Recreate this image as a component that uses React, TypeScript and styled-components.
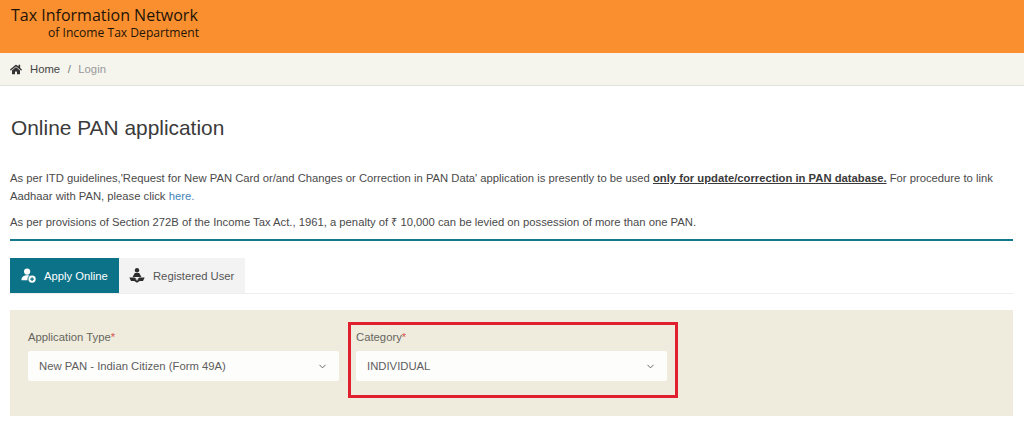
import React from "react";
import styled, { createGlobalStyle } from "styled-components";
import { FaHome } from "react-icons/fa";
import { LuChevronDown } from "react-icons/lu";

const Global = createGlobalStyle`
  html, body { margin: 0; padding: 0; background: #fff; height: 425px; overflow: hidden; }
  body { font-family: "Liberation Sans", Arial, sans-serif; color: #4a4a4a; }
`;

const Header = styled.header`
  height: 53px;
  background: #f98f2e;
  padding: 6px 0 0 11px;
  box-sizing: border-box;
`;
const Logo = styled.div`
  width: 188px;
  font-family: "Open Sans", sans-serif;
  color: #1f1408;
  text-align: right;
`;
const LogoMain = styled.div`
  font-size: 16px;
  line-height: 18px;
  white-space: nowrap;
  text-align: left;
`;
const LogoSub = styled.div`
  font-size: 12.1px;
  line-height: 17px;
  white-space: nowrap;
`;
const Crumbs = styled.nav`
  height: 33px;
  box-sizing: border-box;
  background: #f5f5ee;
  border-bottom: 1px solid #e2e2dc;
  display: flex;
  align-items: center;
  padding: 0 0 0 10px;
  font-size: 11.3px;
  color: #444;
`;
const HomeIcon = styled(FaHome)`
  width: 12px;
  height: 11px;
  color: #333;
  margin-right: 8px;
`;
const CrumbSep = styled.span`
  margin: 0 7.5px;
  color: #777;
`;
const CrumbCurrent = styled.span`
  color: #999;
`;
const Main = styled.main`
  padding: 0 11px 0 10px;
`;
const Title = styled.h1`
  margin: 0;
  padding: 29px 0 0 1px;
  font-size: 20.9px;
  line-height: 26px;
  font-weight: 400;
  color: #3b3b3b;
`;
const Para = styled.p`
  margin: 0;
  font-size: 11.26px;
  line-height: 18px;
  color: #4a4a4a;
`;
const Intro = styled(Para)`
  margin-top: 28px;
`;
const Second = styled(Para)`
  margin-top: 8px;
`;
const Here = styled.a`
  color: #3f7fb8;
`;
const Strong = styled.strong`
  text-decoration: underline;
  color: #3a3a3a;
`;
const Rule = styled.hr`
  border: 0;
  height: 2px;
  background: #12798c;
  margin: 8px 0 0;
`;
const Tabs = styled.div`
  margin-top: 17px;
  display: flex;
  height: 35px;
  border-bottom: 1px solid #eeeeee;
`;
const Tab = styled.div<{ $active?: boolean }>`
  display: flex;
  align-items: center;
  gap: 8px;
  box-sizing: border-box;
  height: 35px;
  width: ${(p) => (p.$active ? "109px" : "126px")};
  padding-left: ${(p) => (p.$active ? "11px" : "10px")};
  font-size: 11.25px;
  background: ${(p) => (p.$active ? "#0c7288" : "#f3f3f3")};
  color: ${(p) => (p.$active ? "#fff" : "#555")};
`;
const TabIcon = styled.svg`
  width: 15px;
  height: 15px;
  flex: none;
`;
const ReaderIcon = styled.svg`
  width: 16px;
  height: 15px;
  flex: none;
`;
const Panel = styled.section`
  margin-top: 16px;
  height: 106px;
  box-sizing: border-box;
  background: #efecdd;
  padding: 20px 18px 0;
  display: flex;
  gap: 17px;
`;
const Field = styled.div`
  position: relative;
  width: 311px;
`;
const Label = styled.label`
  display: block;
  font-size: 11.3px;
  line-height: 15px;
  color: #66655f;
  margin-bottom: 6px;
`;
const Req = styled.span`
  color: #d9534f;
`;
const Select = styled.div`
  height: 30px;
  box-sizing: border-box;
  background: #fdfdfb;
  border-radius: 2px;
  display: flex;
  align-items: center;
  justify-content: space-between;
  padding: 0 11px;
  font-size: 11.3px;
  color: #5e5e5e;
`;
const Chevron = styled(LuChevronDown)`
  width: 11px;
  height: 11px;
  color: #555;
`;
const Highlight = styled.div`
  position: absolute;
  left: -8px;
  top: -8px;
  width: 330px;
  height: 76px;
  box-sizing: border-box;
  border: 3px solid #e0202f;
  pointer-events: none;
`;

export default function App() {
  return (
    <>
      <Global />
      <Header>
        <Logo>
          <LogoMain>Tax Information Network</LogoMain>
          <LogoSub>of Income Tax Department</LogoSub>
        </Logo>
      </Header>
      <Crumbs>
        <HomeIcon />
        <span>Home</span>
        <CrumbSep>/</CrumbSep>
        <CrumbCurrent>Login</CrumbCurrent>
      </Crumbs>
      <Main>
        <Title>Online PAN application</Title>
        <Intro>
          As per ITD guidelines,'Request for New PAN Card or/and Changes or Correction in PAN Data' application is presently to be used{" "}
          <Strong>only for update/correction in PAN database.</Strong> For procedure to link Aadhaar with PAN, please click <Here>here.</Here>
        </Intro>
        <Second>
          As per provisions of Section 272B of the Income Tax Act., 1961, a penalty of ₹ 10,000 can be levied on possession of more than one PAN.
        </Second>
        <Rule />
        <Tabs>
          <Tab $active>
            <TabIcon viewBox="0 0 16 16">
              <circle cx="6.5" cy="3.8" r="3.3" fill="#fff" />
              <path d="M0.5 13c0-3.6 2.4-5.3 6-5.3 1 0 1.9.1 2.7.4-1.6.8-2.5 2.5-2.3 4.9H.5z" fill="#fff" />
              <circle cx="11.8" cy="11.8" r="3.9" fill="#fff" />
              <path d="M11.8 9.8v4M9.8 11.8h4" stroke="#0c7288" strokeWidth="1.3" />
            </TabIcon>
            Apply Online
          </Tab>
          <Tab>
            <ReaderIcon viewBox="0 0 16 15">
              <circle cx="8" cy="2.3" r="2.2" fill="#2c2c2c" />
              <path d="M5.8 5h4.4l2.2 4H3.6z" fill="#2c2c2c" />
              <path d="M0.3 9.4h5.2L8 11l2.5-1.6h5.2L14 13h-3.3L8 14.8 5.3 13H2z" fill="#2c2c2c" />
              <path d="M8 9.6v3M6.6 11h2.8" stroke="#f3f3f3" strokeWidth="0.9" />
            </ReaderIcon>
            Registered User
          </Tab>
        </Tabs>
        <Panel>
          <Field>
            <Label>
              Application Type<Req>*</Req>
            </Label>
            <Select>
              New PAN - Indian Citizen (Form 49A)
              <Chevron />
            </Select>
          </Field>
          <Field>
            <Label>
              Category<Req>*</Req>
            </Label>
            <Select>
              INDIVIDUAL
              <Chevron />
            </Select>
            <Highlight />
          </Field>
        </Panel>
      </Main>
    </>
  );
}
